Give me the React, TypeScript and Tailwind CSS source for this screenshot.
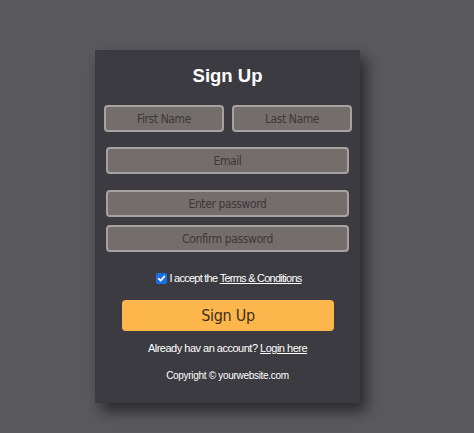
import React from "react";

export default function App() {
  const inputCls =
    "h-[27px] rounded-[4px] border-2 border-[#a7a2a1] bg-[#736d6c] text-center text-[12px] tracking-[-0.4px] text-[#3d3838] placeholder:text-[#3d3838] outline-none";
  const font = { fontFamily: '"DejaVu Sans Condensed", "DejaVu Sans", sans-serif' };
  return (
    <div
      className="w-[474px] h-[433px] bg-[#59595e] pt-[50px] overflow-hidden"
      style={{ fontFamily: '"Liberation Sans", Arial, sans-serif' }}
    >
      <div className="ml-[95px] w-[265px] h-[353px] bg-[#3c3b41] pt-[14px] shadow-[6px_8px_14px_rgba(0,0,0,0.55)] flex flex-col">
        <h1 className="text-center text-white font-bold text-[18.5px] leading-[24px]">Sign Up</h1>
        <div className="mt-[17px] ml-[9px] flex gap-[8px]">
          <input className={`${inputCls} w-[120px]`} style={font} placeholder="First Name" />
          <input className={`${inputCls} w-[120px]`} style={font} placeholder="Last Name" />
        </div>
        <input className={`${inputCls} mt-[15px] ml-[11px] w-[243px]`} style={font} placeholder="Email" />
        <input className={`${inputCls} mt-[16px] ml-[11px] w-[243px]`} style={font} placeholder="Enter password" />
        <input className={`${inputCls} mt-[8px] ml-[11px] w-[243px]`} style={font} placeholder="Confirm password" />
        <div className="mt-[19px] h-[14px] flex items-center justify-center text-[11px] tracking-[-0.75px] text-white">
          <span className="w-[11px] h-[11px] rounded-[2px] bg-[#1a6fe6] flex items-center justify-center mr-[2px] ml-[3px]">
            <svg width="9" height="9" viewBox="0 0 10 10">
              <path d="M1.8 5.2 L4 7.4 L8.3 2.6" fill="none" stroke="white" strokeWidth="1.8" strokeLinecap="round" strokeLinejoin="round" />
            </svg>
          </span>
          <span>I accept the&nbsp;</span>
          <span className="underline">Terms &amp; Conditions</span>
        </div>
        <button
          className="mt-[15px] ml-[27px] w-[212px] h-[31px] rounded-[4px] bg-[#fcb64c] text-[#3d2f1b] text-[16px] tracking-[-0.3px]"
          style={font}
        >
          Sign Up
        </button>
        <p className="mt-[9px] text-center text-[11px] tracking-[-0.5px] leading-[16px] text-white">
          Already hav an account? <span className="underline">Login here</span>
        </p>
        <p className="mt-[13px] text-center text-[10px] tracking-[-0.3px] leading-[14px] text-white">
          Copyright © yourwebsite.com
        </p>
      </div>
    </div>
  );
}
